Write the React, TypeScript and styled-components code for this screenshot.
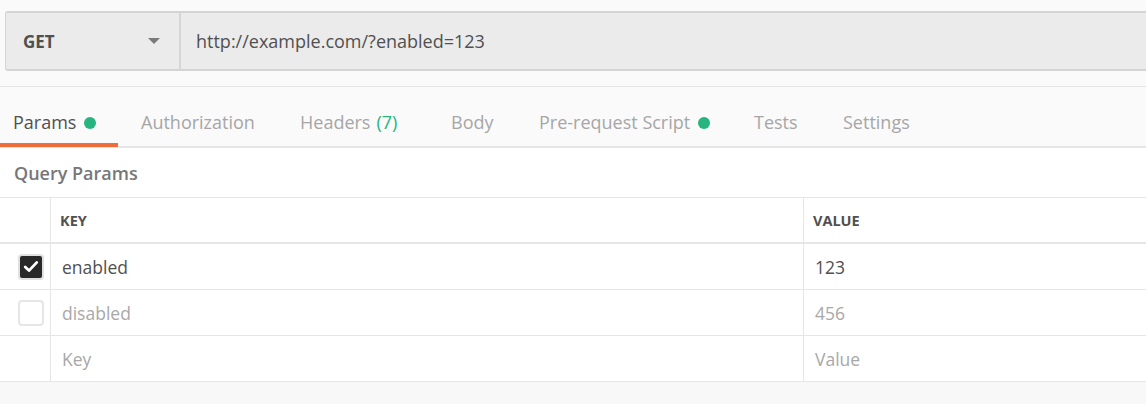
import React from "react";
import styled, { createGlobalStyle } from "styled-components";

const Global = createGlobalStyle`
  html, body { margin: 0; padding: 0; background: #fafafa; }
  body { font-family: "Open Sans", "Liberation Sans", sans-serif; color: #505050; }
  * { box-sizing: border-box; }
`;

const Page = styled.div`
  width: 1146px;
  height: 404px;
  background: #fafafa;
  display: flex;
  flex-direction: column;
  overflow: hidden;
`;

const UrlArea = styled.div`
  padding: 11px 0 15px 5px;
`;

const UrlBar = styled.div`
  display: flex;
  height: 60px;
  background: #ebebeb;
  border: 1px solid #d4d4d4;
  border-top-width: 2px;
  border-bottom-width: 2px;
  border-right: none;
  border-radius: 3px 0 0 3px;
`;

const Method = styled.div`
  width: 175px;
  display: flex;
  align-items: center;
  justify-content: space-between;
  padding: 0 19px 0 17px;
  border-right: 2px solid #d6d6d6;
  font-weight: 700;
  font-size: 17px;
  color: #505050;
`;

const Caret = styled.span`
  width: 0;
  height: 0;
  border-left: 6px solid transparent;
  border-right: 6px solid transparent;
  border-top: 6px solid #7a7a7a;
`;

const Url = styled.div`
  display: flex;
  align-items: center;
  padding-left: 15px;
  font-size: 18px;
  color: #505050;
`;

const Tabs = styled.div`
  display: flex;
  height: 62px;
  border-top: 1px solid #e6e6e6;
  border-bottom: 2px solid #e6e6e6;
  background: #fafafa;
`;

const Tab = styled.div<{ $active?: boolean; $w: number; $pad?: number }>`
  width: ${(p) => p.$w}px;
  display: flex;
  align-items: center;
  padding-left: ${(p) => p.$pad ?? 0}px;
  padding-top: 10px;
  font-size: 18px;
  color: ${(p) => (p.$active ? "#505050" : "#a6a6a6")};
  position: relative;
  &::after {
    content: "";
    display: ${(p) => (p.$active ? "block" : "none")};
    position: absolute;
    left: 0;
    right: 0;
    bottom: -1px;
    height: 4px;
    background: #f26b3a;
  }
`;

const Dot = styled.span`
  display: inline-block;
  width: 12px;
  height: 12px;
  border-radius: 50%;
  background: #26b47f;
  margin-left: 8px;
  margin-top: 2px;
`;

const Count = styled.span`
  color: #26b47f;
  margin-left: 6px;
`;

const Body = styled.div`
  flex: 1;
  background: #fff;
  display: flex;
  flex-direction: column;
`;

const Section = styled.div`
  height: 49px;
  display: flex;
  align-items: center;
  padding-left: 14px;
  font-size: 18px;
  font-weight: 600;
  color: #777;
`;

const Table = styled.div`
  display: grid;
  grid-template-columns: 50px 753px 1fr;
  border-top: 1px solid #e6e6e6;
`;

const Cell = styled.div<{ $head?: boolean; $first?: boolean; $muted?: boolean }>`
  height: 46px;
  display: flex;
  align-items: center;
  padding-left: ${(p) => (p.$first ? 18 : p.$head ? 9 : 11)}px;
  border-bottom: ${(p) => (p.$head ? 2 : 1)}px solid #e6e6e6;
  border-left: ${(p) => (p.$first ? "none" : "1px solid #e6e6e6")};
  font-size: ${(p) => (p.$head ? 14.5 : 17.5)}px;
  font-weight: ${(p) => (p.$head ? 700 : 400)};
  color: ${(p) => (p.$head ? "#505050" : p.$muted ? "#a8a8a8" : "#505050")};
  padding-top: ${(p) => (p.$head ? 1 : 0)}px;
`;

const Check = styled.span<{ $on?: boolean }>`
  width: 26px;
  height: 26px;
  border-radius: 4px;
  border: 2px solid ${(p) => (p.$on ? "#e0e0e0" : "#e6e6e6")};
  background: ${(p) => (p.$on ? "#282828" : "#fff")};
  display: flex;
  align-items: center;
  justify-content: center;
`;

const Footer = styled.div`
  flex: 1;
  background: #f8f8f8;
`;

export default function App() {
  return (
    <Page>
      <Global />
      <UrlArea>
        <UrlBar>
          <Method>
            GET
            <Caret />
          </Method>
          <Url>http://example.com/?enabled=123</Url>
        </UrlBar>
      </UrlArea>
      <Tabs>
        <Tab $active $w={118} $pad={13}>
          Params
          <Dot />
        </Tab>
        <Tab $w={182} $pad={23}>Authorization</Tab>
        <Tab $w={151}>
          Headers<Count>(7)</Count>
        </Tab>
        <Tab $w={88}>Body</Tab>
        <Tab $w={215}>
          Pre-request Script
          <Dot />
        </Tab>
        <Tab $w={89}>Tests</Tab>
        <Tab $w={120}>Settings</Tab>
      </Tabs>
      <Body>
        <Section>Query Params</Section>
        <Table>
          <Cell $head $first />
          <Cell $head>KEY</Cell>
          <Cell $head>VALUE</Cell>

          <Cell $first>
            <Check $on>
              <svg width="16" height="13" viewBox="0 0 16 13">
                <path d="M2.2 7 L6 10.6 L13.8 2.4" fill="none" stroke="#fff" strokeWidth="2.8" strokeLinecap="round" strokeLinejoin="round" />
              </svg>
            </Check>
          </Cell>
          <Cell>enabled</Cell>
          <Cell>123</Cell>

          <Cell $first>
            <Check />
          </Cell>
          <Cell $muted>disabled</Cell>
          <Cell $muted>456</Cell>

          <Cell $first />
          <Cell $muted>Key</Cell>
          <Cell $muted>Value</Cell>
        </Table>
        <Footer />
      </Body>
    </Page>
  );
}
